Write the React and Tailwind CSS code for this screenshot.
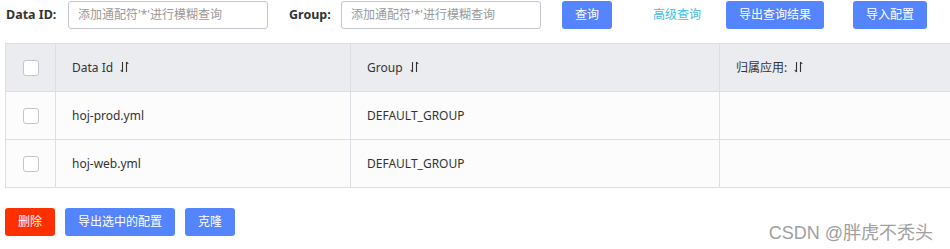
import React from "react";

const font = { fontFamily: '"Noto Sans", "Noto Sans CJK SC", sans-serif' };

function SortIcon() {
  return (
    <svg width="9" height="12" viewBox="0 0 9 12" className="inline-block ml-[7px] -mt-[2px]" fill="none" stroke="#333" strokeWidth="1.1">
      <path d="M2.5 1 V11 M0.7 9 L2.5 11" />
      <path d="M6.5 11 V1 M6.5 1 L8.3 3" />
    </svg>
  );
}

function Checkbox() {
  return <div className="w-[16px] h-[16px] rounded-[3px] border border-[#c4c6cf] bg-white mx-auto" />;
}

function Btn({ children, red }) {
  return (
    <button
      className={
        "h-[28px] px-[13px] rounded-[3px] text-white text-[12px] leading-none whitespace-nowrap " +
        (red ? "bg-[#ff3000]" : "bg-[#5584ff]")
      }
    >
      {children}
    </button>
  );
}

function Input() {
  return (
    <div className="w-[200px] h-[28px] shrink-0 rounded-[3px] border border-[#c4c6cf] flex items-center pl-[9px] text-[12px] text-[#999] whitespace-nowrap">
      添加通配符'*'进行模糊查询
    </div>
  );
}

export default function App() {
  const rows = ["hoj-prod.yml", "hoj-web.yml"];
  return (
    <div className="relative w-[950px] h-[249px] overflow-hidden bg-white text-[#333]" style={font}>
      <div className="flex items-center h-[28px] mt-[1px]">
        <span className="ml-[6px] w-[50px] shrink-0 whitespace-nowrap text-[12.5px] font-bold text-[#333]">Data ID:</span>
        <div className="ml-[12px]"><Input /></div>
        <span className="ml-[21px] w-[43px] shrink-0 whitespace-nowrap text-[12.5px] font-bold text-[#333]">Group:</span>
        <div className="ml-[9px]"><Input /></div>
        <div className="ml-[21px]"><Btn>查询</Btn></div>
        <span className="ml-[41px] whitespace-nowrap text-[12px] text-[#3cbfdc]">高级查询</span>
        <div className="ml-[25px]"><Btn>导出查询结果</Btn></div>
        <div className="ml-[29px]"><Btn>导入配置</Btn></div>
      </div>

      <div className="mt-[14px] ml-[5px] w-[1000px]">
        <table className="table-fixed border-collapse w-[1000px] text-[12px]">
          <colgroup>
            <col className="w-[50px]" />
            <col className="w-[295px]" />
            <col className="w-[369px]" />
            <col />
          </colgroup>
          <thead>
            <tr className="bg-[#ebecf0] h-[48px]">
              <th className="border border-[#dcdee3] font-normal"><Checkbox /></th>
              <th className="border border-[#dcdee3] font-normal text-left pl-[16px]">Data Id<SortIcon /></th>
              <th className="border border-[#dcdee3] font-normal text-left pl-[16px]">Group<SortIcon /></th>
              <th className="border border-[#dcdee3] font-normal text-left pl-[16px]">归属应用:<SortIcon /></th>
            </tr>
          </thead>
          <tbody>
            {rows.map((r) => (
              <tr key={r} className="bg-[#fcfcfc] h-[48px]">
                <td className="border border-[#dcdee3]"><Checkbox /></td>
                <td className="border border-[#dcdee3] pl-[16px]">{r}</td>
                <td className="border border-[#dcdee3] pl-[16px]">DEFAULT_GROUP</td>
                <td className="border border-[#dcdee3]"></td>
              </tr>
            ))}
          </tbody>
        </table>
      </div>

      <div className="flex items-center gap-[10px] ml-[5px] mt-[20px]">
        <Btn red>删除</Btn>
        <Btn>导出选中的配置</Btn>
        <Btn>克隆</Btn>
      </div>

      <div
        className="absolute right-[17px] bottom-[5px] text-[18px] leading-[22px] text-[#a0a0a0] whitespace-nowrap"
        style={{ fontFamily: '"Liberation Sans", "Noto Sans CJK SC", sans-serif' }}
      >
        CSDN @胖虎不秃头
      </div>
    </div>
  );
}
